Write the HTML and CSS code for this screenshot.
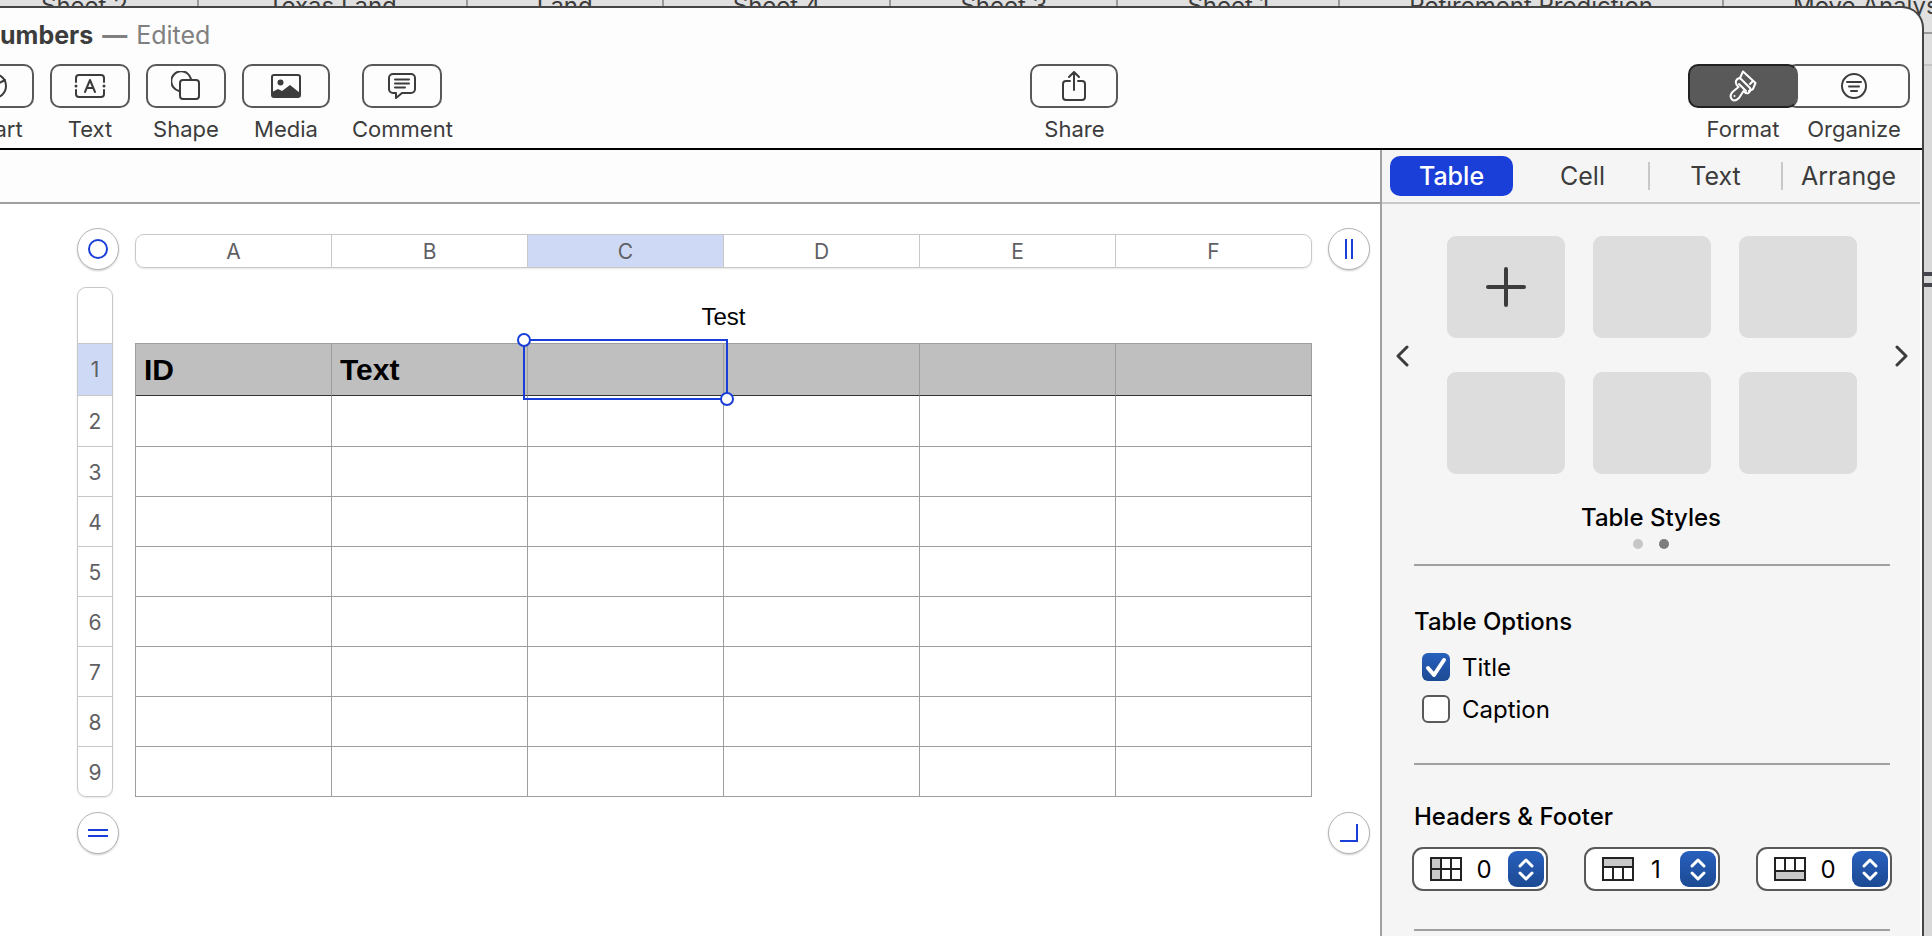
FILE: index.html
```
<!DOCTYPE html>
<html lang="en">
<head>
  <meta charset="UTF-8">
  <title>Numbers</title>
  <link rel="stylesheet" href="styles.css">
</head>
<body>

  <!-- window behind -->
  <div class="backdrop">
    <div class="back-tabs">
      <span>Sheet 2</span>
      <span>Texas Land</span>
      <span>Land</span>
      <span>Sheet 4</span>
      <span>Sheet 3</span>
      <span>Sheet 1</span>
      <span>Retirement Prediction</span>
      <span>Move Analysis</span>
    </div>
    <div class="back-ruler"></div>
    <div class="back-mark"></div>
  </div>

  <div class="window">
    <header class="titlebar">
      <h1>Numbers <span class="dash">—</span> <span class="edited">Edited</span></h1>

      <div class="toolbar">
        <div class="tools">
          <div class="tool">
            <button type="button" id="chart" aria-labelledby="chartLabel">
              <svg width="28" height="28" viewBox="0 0 28 28"><circle cx="14" cy="14" r="12"/><path d="M14 14L25 8M14 14l5 11M14 14L3 8"/></svg>
            </button>
            <label id="chartLabel" for="chart">Chart</label>
          </div>
          <div class="tool">
            <button type="button" id="text" aria-labelledby="textLabel">
              <svg width="32" height="26" viewBox="0 0 32 26">
                <path d="M2 9V5a3 3 0 0 1 3-3h22a3 3 0 0 1 3 3v4M2 17v4a3 3 0 0 0 3 3h22a3 3 0 0 0 3-3v-4"/>
                <path d="M11 19l5-12 5 12M13 15h6"/>
                <circle class="solid" cx="2" cy="13" r="1.5"/><circle class="solid" cx="30" cy="13" r="1.5"/>
              </svg>
            </button>
            <label id="textLabel" for="text">Text</label>
          </div>
          <div class="tool">
            <button type="button" id="shape" aria-labelledby="shapeLabel">
              <svg width="30" height="30" viewBox="0 0 30 30"><path d="M8 20A10 10 0 1 1 20 8"/><rect x="9" y="9" width="19" height="19" rx="3"/></svg>
            </button>
            <label id="shapeLabel" for="shape">Shape</label>
          </div>
          <div class="tool tool-wide">
            <button type="button" id="media" aria-labelledby="mediaLabel">
              <svg width="30" height="24" viewBox="0 0 30 24">
                <rect x="1" y="1" width="28" height="22" rx="2"/>
                <circle class="solid" cx="9.500" cy="8.500" r="3"/>
                <path class="solid" d="M1 18l6-3 4 2 8-6 10 8v4H1z"/>
              </svg>
            </button>
            <label id="mediaLabel" for="media">Media</label>
          </div>
          <div class="tool tool-comment">
            <button type="button" id="comment" aria-labelledby="commentLabel">
              <svg width="28" height="28" viewBox="0 0 28 28">
                <path d="M5 2h18a4 4 0 0 1 4 4v11a4 4 0 0 1-4 4H14l-6 5v-5H5a4 4 0 0 1-4-4V6a4 4 0 0 1 4-4z"/>
                <path class="thin" d="M7 7.500h14M7 11.500h14M7 15.500h10"/>
              </svg>
            </button>
            <label id="commentLabel" for="comment">Comment</label>
          </div>
        </div>

        <div class="tool tool-wide">
          <button type="button" id="share" aria-labelledby="shareLabel">
            <svg width="24" height="30" viewBox="0 0 24 30"><path d="M8 10H4a3 3 0 0 0-3 3v13a3 3 0 0 0 3 3h16a3 3 0 0 0 3-3V13a3 3 0 0 0-3-3h-4M12 19V2M7 6l5-5 5 5"/></svg>
          </button>
          <label id="shareLabel" for="share">Share</label>
        </div>

        <div class="segments">
          <div class="tool seg-on">
            <button type="button" id="format" aria-labelledby="formatLabel">
              <svg width="28" height="32" viewBox="0 0 28 32">
                <path d="M11 8l3-6.500L26.500 13 24 19l-4 2"/>
                <path d="M7 11q2-4 5-2l9 9q1 3-1.500 5-3 1-5-2L10 28q-4 4-7 1.500Q0 26 3.500 22L9.500 17Q6 14 7 11z"/>
                <path d="M10 14l7 7M21 14l3-3"/>
                <circle class="solid" cx="5.500" cy="26" r="1"/>
              </svg>
            </button>
            <label id="formatLabel" for="format">Format</label>
          </div>
          <div class="tool seg-off">
            <button type="button" id="organize" aria-labelledby="organizeLabel">
              <svg width="28" height="28" viewBox="0 0 28 28"><circle cx="14" cy="14" r="12"/><path d="M7 10h14M9 14.500h10M11 19h6"/></svg>
            </button>
            <label id="organizeLabel" for="organize">Organize</label>
          </div>
        </div>
      </div>
    </header>

    <div class="content">
      <main class="canvas">
        <div class="sheet-bar"></div>

        <div class="sheet">
          <button type="button" class="handle" aria-label="Move table">
            <svg width="22" height="22" viewBox="0 0 22 22"><circle cx="11" cy="11" r="9"/></svg>
          </button>
          <div class="col-ruler">
            <span>A</span><span>B</span><span class="selected">C</span><span>D</span><span>E</span><span>F</span>
          </div>
          <button type="button" class="handle" aria-label="Add columns">
            <svg width="22" height="22" viewBox="0 0 22 22"><path d="M8 1v20M14 1v20"/></svg>
          </button>

          <div class="row-ruler">
            <span class="caption-row"></span>
            <span class="header-row selected">1</span>
            <span class="first-row">2</span>
            <span>3</span><span>4</span><span>5</span><span>6</span><span>7</span><span>8</span><span>9</span>
          </div>
          <table class="cells">
            <caption>Test</caption>
            <thead>
              <tr><th>ID</th><th>Text</th><th class="active"><i class="selection"></i></th><th></th><th></th><th></th></tr>
            </thead>
            <tbody>
              <tr class="first-row"><td></td><td></td><td></td><td></td><td></td><td></td></tr>
              <tr><td></td><td></td><td></td><td></td><td></td><td></td></tr>
              <tr><td></td><td></td><td></td><td></td><td></td><td></td></tr>
              <tr><td></td><td></td><td></td><td></td><td></td><td></td></tr>
              <tr><td></td><td></td><td></td><td></td><td></td><td></td></tr>
              <tr><td></td><td></td><td></td><td></td><td></td><td></td></tr>
              <tr><td></td><td></td><td></td><td></td><td></td><td></td></tr>
              <tr><td></td><td></td><td></td><td></td><td></td><td></td></tr>
            </tbody>
          </table>
          <span></span>

          <button type="button" class="handle" aria-label="Add rows">
            <svg width="22" height="22" viewBox="0 0 22 22"><path d="M1 8h20M1 14h20"/></svg>
          </button>
          <span></span>
          <button type="button" class="handle" aria-label="Resize table">
            <svg width="22" height="22" viewBox="0 0 22 22"><path d="M2 19h17V2"/></svg>
          </button>
        </div>
      </main>

      <aside class="sidebar">
        <nav class="tabs">
          <button type="button" class="tab tab-on">Table</button>
          <button type="button" class="tab">Cell</button>
          <i class="tab-line"></i>
          <button type="button" class="tab">Text</button>
          <i class="tab-line"></i>
          <button type="button" class="tab">Arrange</button>
        </nav>

        <section class="styles">
          <div class="styles-row">
            <button type="button" class="arrow" aria-label="Previous styles">
              <svg width="14" height="24" viewBox="0 0 14 24"><path d="M12 4L3 13l9 9"/></svg>
            </button>
            <div class="tiles">
              <button type="button" class="tile" aria-label="Add style">
                <svg width="42" height="42" viewBox="0 0 42 42"><path d="M21 3v36M3 21h36"/></svg>
              </button>
              <button type="button" class="tile" aria-label="Style 2"></button>
              <button type="button" class="tile" aria-label="Style 3"></button>
              <button type="button" class="tile" aria-label="Style 4"></button>
              <button type="button" class="tile" aria-label="Style 5"></button>
              <button type="button" class="tile" aria-label="Style 6"></button>
            </div>
            <button type="button" class="arrow" aria-label="Next styles">
              <svg width="14" height="24" viewBox="0 0 14 24"><path d="M3 4l9 9-9 9"/></svg>
            </button>
          </div>
          <h2>Table Styles</h2>
          <div class="dots"><i></i><i class="dot-on"></i></div>
        </section>

        <section class="panel options">
          <h2>Table Options</h2>
          <label class="check"><input type="checkbox" checked> Title</label>
          <label class="check"><input type="checkbox"> Caption</label>
        </section>

        <section class="panel">
          <h2>Headers &amp; Footer</h2>
          <div class="pickers">
            <div class="picker">
              <svg class="grid-icon" width="32" height="24" viewBox="0 0 32 24"><rect x="1" y="1" width="30" height="22" fill="#fff"/><path class="shade" d="M2 2h9v20H2z"/><path d="M1 1h30v22H1zM11 1v22M21 1v22M1 12h30"/></svg>
              <select aria-label="Header columns"><option>0</option><option>1</option><option>2</option></select>
              <svg class="updown" width="36" height="36" viewBox="0 0 36 36"><path d="M12 15l6-6 6 6M12 22l6 6 6-6"/></svg>
            </div>
            <div class="picker">
              <svg class="grid-icon" width="32" height="24" viewBox="0 0 32 24"><path class="shade" d="M2 2h28v8H2z"/><path d="M1 1h30v22H1zM1 10h30M11 10v13M21 10v13"/></svg>
              <select aria-label="Header rows"><option>0</option><option selected>1</option><option>2</option></select>
              <svg class="updown" width="36" height="36" viewBox="0 0 36 36"><path d="M12 15l6-6 6 6M12 22l6 6 6-6"/></svg>
            </div>
            <div class="picker">
              <svg class="grid-icon" width="32" height="24" viewBox="0 0 32 24"><path class="shade" d="M2 14h28v8H2z"/><path d="M1 1h30v22H1zM1 14h30M11 1v13M21 1v13"/></svg>
              <select aria-label="Footer rows"><option>0</option><option>1</option><option>2</option></select>
              <svg class="updown" width="36" height="36" viewBox="0 0 36 36"><path d="M12 15l6-6 6 6M12 22l6 6 6-6"/></svg>
            </div>
          </div>
        </section>
        <section class="panel"></section>
      </aside>
    </div>
  </div>

</body>
</html>
```
FILE: styles.css
```
*,
*::before,
*::after {
  box-sizing: border-box;
}

body {
  margin: 0;
  height: 100vh;
  overflow: hidden;
  font-family: Inter, "Liberation Sans", sans-serif;
  color: #3c3c3c;
}

button {
  font: inherit;
  color: inherit;
  padding: 0;
  border: none;
  background: none;
}

svg {
  display: block;
  fill: none;
  stroke: currentColor;
  stroke-width: 2;
  stroke-linecap: round;
  stroke-linejoin: round;
}

.solid {
  fill: currentColor;
  stroke: none;
}

/* window behind */
.backdrop {
  position: absolute;
  inset: 0;
  overflow: hidden;
  background: #d8d8d8;
}

.back-tabs {
  display: flex;
  height: 34px;
  margin-left: -28px;
  background: #e0e0e0;
  border-bottom: 2px solid #999;
  overflow: hidden;
}

.back-tabs span {
  flex: none;
  height: 40px;
  padding: 0 69px;
  margin-top: -8px;
  border-right: 2px solid #999;
  font-size: 24px;
  line-height: 28px;
  white-space: nowrap;
}

.back-ruler {
  height: 32px;
  background: #dedede;
  border-bottom: 2px solid #c4c4c4;
}

.back-mark {
  width: 12px;
  height: 15px;
  margin: 206px 0 0 auto;
  border-top: 4px solid #45464d;
  border-bottom: 4px solid #45464d;
}

.window {
  position: relative;
  display: flex;
  flex-direction: column;
  height: calc(100vh - 6px);
  margin: 6px 8px 0 -46px;
  border: 2px solid #444;
  border-width: 2px 2px 0 0;
  border-radius: 0 22px 0 0;
  background: #fdfdfd;
  overflow: hidden;
}

.titlebar {
  flex: none;
  padding: 8px 0 6px;
  border-bottom: 2px solid #000;
}

h1 {
  margin: 0 0 12px 27px;
  font-size: 25px;
  line-height: 38px;
  height: 36px;
}

.dash,
.edited {
  color: #808080;
}

.dash {
  margin: 0 3px;
}

.edited {
  font-weight: 400;
}

.toolbar {
  display: flex;
  justify-content: space-between;
  padding-right: 12px;
}

.tools {
  display: flex;
  gap: 16px;
  padding-right: 8px;
}

.tool {
  display: flex;
  flex-direction: column;
  align-items: center;
  gap: 8px;
}

.tool button {
  display: flex;
  align-items: center;
  justify-content: center;
  width: 80px;
  height: 44px;
  border: 2px solid #595959;
  border-radius: 10px;
}

.tool-wide button {
  width: 88px;
}

.tool-comment {
  margin-left: 6px;
}

.tool label {
  font-size: 22px;
  line-height: 26px;
}

.segments {
  display: flex;
}

.seg-on {
  z-index: 1;
}

.seg-on button {
  width: 110px;
  color: #fff;
  background: #595959;
  border-color: #222;
  border-right-color: #595959;
}

/* runs under the rounded edge of the selected segment */
.seg-off {
  margin-left: -12px;
}

.seg-off button {
  width: 124px;
  padding-left: 12px;
}

.seg-off label {
  padding-left: 12px;
}

.content {
  flex: 1;
  display: flex;
  min-height: 0;
}

.canvas {
  flex: 1;
  background: #fff;
}

.sheet-bar {
  height: 54px;
  background: #fdfdfd;
  border-bottom: 2px solid #a0a0a0;
}

.sheet {
  display: grid;
  grid-template-columns: 42px 1fr 42px;
  grid-template-rows: 44px auto 42px;
  gap: 15px 16px;
  padding: 24px 10px 24px 123px;
}

.handle {
  display: flex;
  align-items: center;
  justify-content: center;
  width: 42px;
  height: 42px;
  color: #1a3fd8;
  background: #fff;
  border: 1px solid #b5b5b5;
  border-radius: 50%;
  box-shadow: 0 1px 2px rgba(0,0,0,0.2);
}

.handle svg {
  stroke-linecap: butt;
  stroke-linejoin: miter;
}

.col-ruler,
.row-ruler {
  display: flex;
  color: #5f5f64;
  border: 1px solid #c8c8c8;
  border-radius: 9px;
  box-shadow: 0 1px 2px rgba(0,0,0,0.1);
  overflow: hidden;
  font-size: 21px;
}

.col-ruler {
  margin-top: 6px;
  height: 34px;
}

.col-ruler span {
  flex: 1;
  line-height: 34px;
  text-align: center;
  border-right: 1px solid #c8c8c8;
}

.row-ruler {
  flex-direction: column;
  align-self: start;
  width: 36px;
  line-height: 52px;
  text-align: center;
}

.row-ruler span {
  height: 50px;
  border-bottom: 1px solid #c8c8c8;
}

.row-ruler .caption-row {
  height: 56px;
}

.row-ruler .header-row {
  height: 52px;
}

.row-ruler .first-row {
  height: 51px;
}

.col-ruler span:last-child {
  border-right: none;
}

.row-ruler span:last-child {
  height: 49px;
  border-bottom: none;
}

.selected {
  background: #ced9f5;
}

/* table */
.cells {
  width: 100%;
  table-layout: fixed;
  border-spacing: 0;
  border-left: 1px solid #9e9e9e;
  font-family: "Liberation Sans", Arial, sans-serif;
  color: #000;
}

.cells caption {
  height: 56px;
  font-size: 24px;
  line-height: 60px;
}

.cells th,
.cells td {
  height: 50px;
  padding: 0 8px;
  border-right: 1px solid #9e9e9e;
  border-bottom: 1px solid #9e9e9e;
}

.cells .first-row td {
  height: 51px;
}

.cells th {
  height: 53px;
  font-size: 30px;
  line-height: 36px;
  text-align: left;
  background: #bebfbe;
  border-top: 1px solid #9e9e9e;
  border-bottom-color: #333;
}

.cells .active {
  position: relative;
}

.selection {
  position: absolute;
  inset: -5px;
  border: 2px solid #1a3fd8;
}

.selection::before,
.selection::after {
  content: "";
  position: absolute;
  width: 14px;
  height: 14px;
  background: #fff;
  border: 2px solid #1a3fd8;
  border-radius: 50%;
}

.selection::before {
  top: -8px;
  left: -8px;
}

.selection::after {
  right: -8px;
  bottom: -8px;
}

/* sidebar */
.sidebar {
  flex: none;
  width: 542px;
  color: #000;
  background: #f5f5f5;
  border-left: 2px solid #a0a0a0;
  border-right: 2px solid #fdfdfd;
}

.tabs {
  display: flex;
  align-items: center;
  height: 54px;
  padding: 0 6px 0 4px;
  border-bottom: 2px solid #c8c8c8;
}

.tab {
  flex: 1 1 0;
  height: 40px;
  margin: 0 4px;
  color: #3c3c3c;
  font-size: 25px;
  border-radius: 10px;
}

.tab-on {
  color: #fff;
  font-weight: 500;
  background: #1a3fd8;
}

.tab-line {
  width: 2px;
  height: 28px;
  background: #c8c8c8;
}

.styles {
  padding-top: 32px;
}

.styles-row {
  display: flex;
  align-items: center;
  justify-content: space-between;
  padding: 0 12px 0 13px;
}

.arrow svg {
  color: #3c3c3c;
  stroke-width: 3;
}

.tiles {
  display: grid;
  grid-template-columns: repeat(3, 118px);
  gap: 34px 28px;
}

.tile {
  display: flex;
  align-items: center;
  justify-content: center;
  height: 102px;
  color: #3c3c3c;
  background: #ddd;
  border-radius: 9px;
}

.tile svg {
  stroke-width: 4;
}

h2 {
  margin: 0;
  font-size: 24px;
  font-weight: 500;
  line-height: 28px;
}

.styles h2 {
  margin-top: 30px;
  text-align: center;
}

.dots {
  display: flex;
  justify-content: center;
  gap: 16px;
  margin: 7px 0 15px;
}

.dots i {
  width: 10px;
  height: 10px;
  background: #c6c6c6;
  border-radius: 50%;
}

.dots .dot-on {
  background: #7d7d7d;
}

.panel {
  margin: 0 30px 0 32px;
  padding: 38px 0;
  border-top: 2px solid #a0a0a0;
}

.options {
  padding: 42px 0 40px;
}

.options h2 {
  margin-bottom: 17px;
}

.check {
  display: flex;
  align-items: center;
  gap: 12px;
  height: 28px;
  margin: 0 0 14px 8px;
  font-size: 24px;
}

.check:last-child {
  margin-bottom: 0;
}

.check input {
  appearance: none;
  width: 28px;
  height: 28px;
  margin: 0;
  background: #fff;
  border: 2px solid #595959;
  border-radius: 6px;
}

.check input:checked {
  border: none;
  background: url("data:image/svg+xml,%3Csvg xmlns='http://www.w3.org/2000/svg' viewBox='0 0 28 28'%3E%3Cpath d='M6 15l6 7L22 7' fill='none' stroke='white' stroke-width='4' stroke-linecap='round' stroke-linejoin='round'/%3E%3C/svg%3E"), linear-gradient(#2860bd, #1c4a93);
}

.pickers {
  display: flex;
  justify-content: space-between;
  margin: 16px -2px 0;
}

.picker {
  display: flex;
  align-items: center;
  width: 136px;
  height: 44px;
  padding: 0 2px 0 16px;
  background: #fff;
  border: 2px solid #595959;
  border-radius: 11px;
}

.picker select {
  appearance: none;
  flex: 1;
  min-width: 0;
  padding: 0 2px 0 0;
  border: none;
  background: none;
  color: #000;
  font: inherit;
  font-size: 24px;
  text-align: center;
}

.grid-icon {
  color: #222;
  stroke-linejoin: miter;
  stroke-linecap: butt;
}

.shade {
  fill: #c8c8c8;
  stroke: none;
}

.updown {
  color: #fff;
  stroke-width: 3;
  background: linear-gradient(#2860bd, #1c4a93);
  border-radius: 9px;
}
```
